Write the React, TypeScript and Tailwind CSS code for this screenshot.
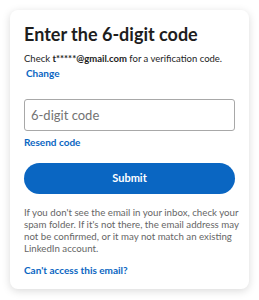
const App = () => {
  return (
    <div
      className="min-h-screen bg-white p-[10px]"
      style={{ fontFamily: 'Lato, "Open Sans", sans-serif' }}
    >
      <div className="w-[239px] h-[279px] rounded-lg bg-white shadow-[0_2px_8px_rgba(0,0,0,0.15)] px-[14px] pt-[12px]">
        <h1 className="text-[18px] font-bold leading-[24px] text-[#1d1d1d]">
          Enter the 6-digit code
        </h1>
        <p className="mt-[6px] text-[9.5px] leading-[14px] text-[#1d1d1d] whitespace-nowrap">
          Check <span className="font-bold">t*****@gmail.com</span> for a verification code.
        </p>
        <button className="ml-[2px] block text-[10px] font-bold leading-[14px] text-[#0a66c2]">
          Change
        </button>
        <input
          placeholder="6-digit code"
          className="mt-[19px] block w-[211px] h-[32px] rounded-[3px] border border-[#a8a8a8] px-[6px] text-[13px] text-[#1d1d1d] placeholder:text-[#737373] outline-none"
        />
        <button className="mt-[4px] block text-[10px] font-bold leading-[14px] text-[#0a66c2]">
          Resend code
        </button>
        <button className="mt-[14px] block w-[211px] h-[31px] rounded-full bg-[#0a66c2] text-white text-[11px] font-bold">
          Submit
        </button>
        <p className="mt-[12px] text-[9.7px] leading-[12px] text-[#666666] whitespace-nowrap">
          If you don't see the email in your inbox, check your
          <br />
          spam folder. If it's not there, the email address may
          <br />
          not be confirmed, or it may not match an existing
          <br />
          LinkedIn account.
        </p>
        <button className="mt-[9px] block text-[10px] font-bold leading-[14px] text-[#0a66c2]">
          Can't access this email?
        </button>
      </div>
    </div>
  );
};

export default App;
